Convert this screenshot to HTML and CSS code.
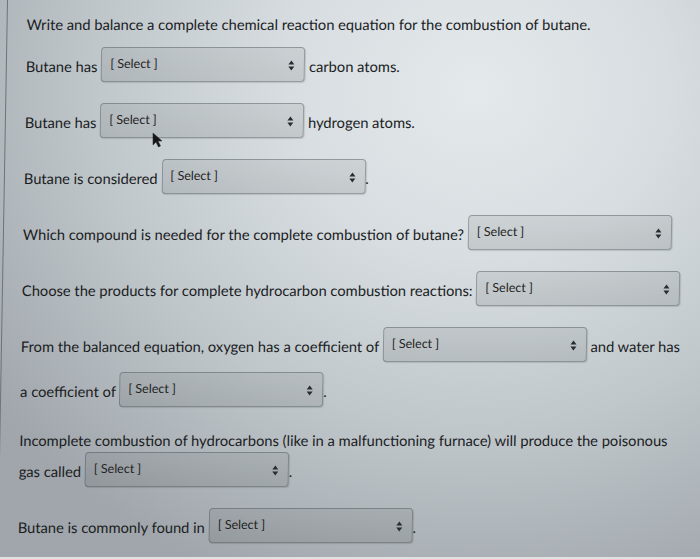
FILE: index.html
```html
<html>
<head>
<title>Combustion of butane</title>
<link rel="stylesheet" href="styles.css">
<meta http-equiv="Content-Type" content="text/html; charset=UTF-8">
</head>
<body>
<div class="screen">
 <div class="quiz">
  <p class="question">Write and balance a complete chemical reaction equation for the combustion of butane.</p>
  <p class="question">Butane has <span class="dropdown"><span class="dropdown-text">[ Select ]</span><svg class="dropdown-arrows" width="7" height="11" viewBox="0 0 7 11"><path d="M3.5 0.5 L6.5 4.5 L0.5 4.5 Z M3.5 10.5 L6.5 6.5 L0.5 6.5 Z"/></svg></span> carbon atoms.</p>
  <p class="question">Butane has <span class="dropdown"><span class="dropdown-text">[ Select ]</span><svg class="dropdown-arrows" width="7" height="11" viewBox="0 0 7 11"><path d="M3.5 0.5 L6.5 4.5 L0.5 4.5 Z M3.5 10.5 L6.5 6.5 L0.5 6.5 Z"/></svg></span> hydrogen atoms.</p>
  <p class="question">Butane is considered <span class="dropdown"><span class="dropdown-text">[ Select ]</span><svg class="dropdown-arrows" width="7" height="11" viewBox="0 0 7 11"><path d="M3.5 0.5 L6.5 4.5 L0.5 4.5 Z M3.5 10.5 L6.5 6.5 L0.5 6.5 Z"/></svg></span>.</p>
  <p class="question">Which compound is needed for the complete combustion of butane? <span class="dropdown"><span class="dropdown-text">[ Select ]</span><svg class="dropdown-arrows" width="7" height="11" viewBox="0 0 7 11"><path d="M3.5 0.5 L6.5 4.5 L0.5 4.5 Z M3.5 10.5 L6.5 6.5 L0.5 6.5 Z"/></svg></span></p>
  <p class="question">Choose the products for complete hydrocarbon combustion reactions: <span class="dropdown"><span class="dropdown-text">[ Select ]</span><svg class="dropdown-arrows" width="7" height="11" viewBox="0 0 7 11"><path d="M3.5 0.5 L6.5 4.5 L0.5 4.5 Z M3.5 10.5 L6.5 6.5 L0.5 6.5 Z"/></svg></span></p>
  <p class="question">From the balanced equation, oxygen has a coefficient of <span class="dropdown"><span class="dropdown-text">[ Select ]</span><svg class="dropdown-arrows" width="7" height="11" viewBox="0 0 7 11"><path d="M3.5 0.5 L6.5 4.5 L0.5 4.5 Z M3.5 10.5 L6.5 6.5 L0.5 6.5 Z"/></svg></span> and water has a coefficient of <span class="dropdown"><span class="dropdown-text">[ Select ]</span><svg class="dropdown-arrows" width="7" height="11" viewBox="0 0 7 11"><path d="M3.5 0.5 L6.5 4.5 L0.5 4.5 Z M3.5 10.5 L6.5 6.5 L0.5 6.5 Z"/></svg></span>.</p>
  <p class="question">Incomplete combustion of hydrocarbons (like in a malfunctioning furnace) will produce the poisonous gas called <span class="dropdown"><span class="dropdown-text">[ Select ]</span><svg class="dropdown-arrows" width="7" height="11" viewBox="0 0 7 11"><path d="M3.5 0.5 L6.5 4.5 L0.5 4.5 Z M3.5 10.5 L6.5 6.5 L0.5 6.5 Z"/></svg></span>.</p>
  <p class="question">Butane is commonly found in <span class="dropdown"><span class="dropdown-text">[ Select ]</span><svg class="dropdown-arrows" width="7" height="11" viewBox="0 0 7 11"><path d="M3.5 0.5 L6.5 4.5 L0.5 4.5 Z M3.5 10.5 L6.5 6.5 L0.5 6.5 Z"/></svg></span>.</p>
 </div>
 <svg class="pointer" width="12" height="16" viewBox="0 0 12 16"><path d="M1 1 L1 13 L4 10 L6.5 15 L8.5 14 L6 9 L10 9 Z" fill="#151515" stroke="#333" stroke-width="0.6"/></svg>
 <div class="bottom-edge"></div>
</div>
</body>
</html>
```

FILE: styles.css
```css
html, body {
 margin: 0;
 padding: 0;
}
body {
 width: 700px;
 height: 559px;
 overflow: hidden;
 font-family: Lato, "Open Sans", sans-serif;
 color: #1b1d1f;
}
.screen {
 position: relative;
 width: 700px;
 height: 559px;
 overflow: hidden;
 background: radial-gradient(ellipse 85% 95% at 68% 16%, #e4eaec 0%, #d7dde0 32%, #c0c7cb 64%, #a0a6ab 100%);
}
.quiz {
 margin-left: 7px;
 width: 664px;
 height: 600px;
 padding: 1px 0 0 19px;
 border-left: 1px solid #6d7478;
 transform: skewX(-1deg);
 transform-origin: 0 0;
}
.question {
 font-size: 14.7px;
 line-height: 24px;
 margin: 11px 0 0 0;
}
.dropdown {
 display: inline-flex;
 align-items: flex-start;
 justify-content: space-between;
 box-sizing: border-box;
 width: 204px;
 height: 35px;
 padding: 8px 9px 0 8px;
 margin-bottom: 10px;
 vertical-align: 4px;
 border: 1px solid rgba(60, 70, 75, 0.38);
 border-radius: 4px;
 background: linear-gradient(rgba(0, 0, 0, 0.06), rgba(0, 0, 0, 0.09));
 box-shadow: 1px 1px 1px rgba(0, 0, 0, 0.12);
}
.dropdown-text {
 font-size: 12.5px;
 line-height: 16px;
 color: #222;
}
.dropdown-arrows {
 margin-top: 4px;
 fill: #2a2d30;
}
.pointer {
 position: absolute;
 left: 152px;
 top: 132px;
}
.bottom-edge {
 position: absolute;
 left: 0;
 bottom: 0;
 width: 700px;
 height: 2px;
 background: #dfe1e2;
}
```
